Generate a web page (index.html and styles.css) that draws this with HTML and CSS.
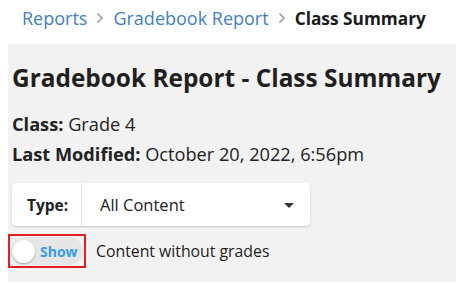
FILE: index.html
```html
<!DOCTYPE html>
<html>
<head>
<meta charset="utf-8">
<link rel="stylesheet" href="styles.css">
</head>
<body>
<nav class="crumbs">
  <a class="crumb-link">Reports</a>
  <span class="sep"><svg width="8" height="12" viewBox="0 0 8 12"><path d="M1.5 1.5 L6 6 L1.5 10.5" fill="none" stroke="#a0a0a0" stroke-width="1.7"/></svg></span>
  <a class="crumb-link">Gradebook Report</a>
  <span class="sep"><svg width="8" height="12" viewBox="0 0 8 12"><path d="M1.5 1.5 L6 6 L1.5 10.5" fill="none" stroke="#a0a0a0" stroke-width="1.7"/></svg></span>
  <span class="crumb-current">Class Summary</span>
</nav>
<main class="panel">
  <h1 class="title">Gradebook Report - Class Summary</h1>
  <div class="meta"><b>Class:</b> Grade 4</div>
  <div class="meta"><b>Last Modified:</b> October 20, 2022, 6:56pm</div>
  <div class="select">
    <div class="select-label">Type:</div>
    <div class="select-value">
      <span>All Content</span>
      <svg class="caret" width="10" height="6" viewBox="0 0 10 6"><path d="M0 0 H10 L5 5 Z" fill="#333"/></svg>
    </div>
  </div>
  <div class="toggle-row">
    <div class="toggle-box">
      <div class="toggle">
        <span class="knob"></span>
        <span class="toggle-text">Show</span>
      </div>
    </div>
    <span class="toggle-label">Content without grades</span>
  </div>
</main>
</body>
</html>
```
FILE: styles.css
```css
html, body {
  margin: 0;
  padding: 0;
  background: #fff;
}
body {
  font-family: "Open Sans", Lato, sans-serif;
  color: #222;
  width: 456px;
  height: 285px;
  overflow: hidden;
}
.crumbs {
  display: flex;
  align-items: center;
  gap: 9px;
  height: 36px;
  padding-left: 22px;
  font-size: 18px;
}
.crumb-link {
  color: #3f7fc4;
}
.sep {
  display: flex;
  align-items: center;
}
.crumb-current {
  font-weight: 700;
  font-size: 17.3px;
  color: #1a1a1a;
}
.panel {
  margin: 8px 0 0 8px;
  background: #f2f2f2;
  height: 238px;
  padding: 18px 0 0 4px;
  box-sizing: border-box;
}
.title {
  margin: 0 0 18px 0;
  font-size: 24.4px;
  font-weight: 700;
  color: #1f1f1f;
  line-height: 32px;
}
.meta {
  font-size: 18.2px;
  line-height: 24px;
  margin-bottom: 6px;
  color: #222;
}
.meta b {
  font-weight: 700;
}
.select {
  display: flex;
  width: 298px;
  height: 43px;
  background: #fff;
  border-radius: 4px;
  box-shadow: 0 1px 2px rgba(0,0,0,0.18);
  margin-top: 17px;
}
.select-label {
  width: 70px;
  box-sizing: border-box;
  border-right: 1px solid #e2e2e2;
  display: flex;
  align-items: center;
  padding-left: 15px;
  font-weight: 700;
  font-size: 15.5px;
}
.select-value {
  flex: 1;
  display: flex;
  align-items: center;
  justify-content: space-between;
  padding: 0 16px 0 18px;
  font-size: 16.5px;
}
.caret {
  margin-top: 2px;
}
.toggle-row {
  display: flex;
  align-items: center;
  gap: 10px;
  margin-top: 8px;
  margin-left: -4px;
}
.toggle-box {
  border: 2px solid #e02020;
  padding: 1px;
  width: 78px;
  height: 34px;
  box-sizing: border-box;
}
.toggle {
  height: 100%;
  background: #e6e6e6;
  border-radius: 14px;
  display: flex;
  align-items: center;
}
.knob {
  width: 23px;
  height: 23px;
  border-radius: 50%;
  background: #fff;
  box-shadow: 0 1px 2px rgba(0,0,0,0.3);
  margin-left: 1px;
}
.toggle-text {
  color: #3a9ae6;
  font-weight: 700;
  font-size: 14px;
  margin-left: 5px;
}
.toggle-label {
  font-size: 15.8px;
  color: #222;
}
```
